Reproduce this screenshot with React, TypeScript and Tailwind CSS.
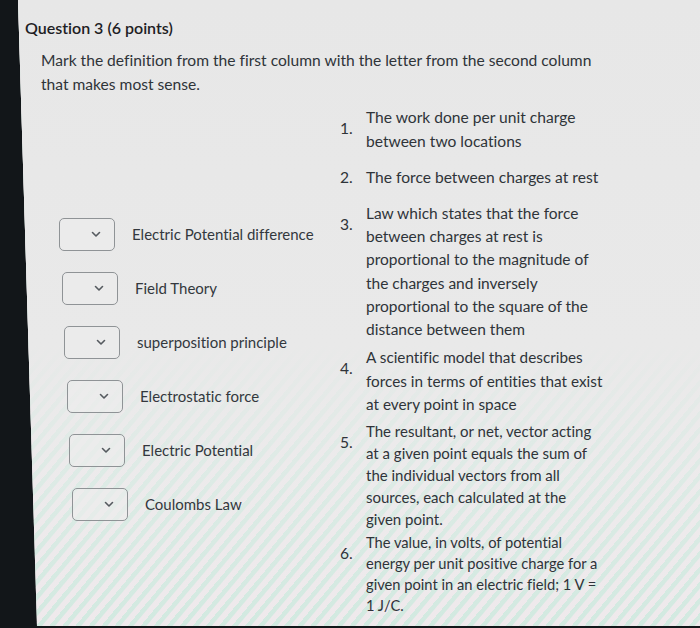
import { ReactNode } from "react";

type Choice = { label: string; shift: string };

type Answer = {
  n: number;
  text: ReactNode;
  wraps: boolean;
  gap: string;
  lead: string;
  size: string;
  width: string;
};

const choices: Choice[] = [
  { label: "Electric Potential difference", shift: "ml-[59px]" },
  { label: "Field Theory", shift: "ml-[62px]" },
  { label: "superposition principle", shift: "ml-[64px]" },
  { label: "Electrostatic force", shift: "ml-[67px]" },
  { label: "Electric Potential", shift: "ml-[69px]" },
  { label: "Coulombs Law", shift: "ml-[72px]" },
];

const answers: Answer[] = [
  {
    n: 1,
    text: "The work done per unit charge between two locations",
    wraps: true,
    gap: "mt-0",
    lead: "leading-[24px]",
    size: "text-[15.6px]",
    width: "w-[242px]",
  },
  {
    n: 2,
    text: "The force between charges at rest",
    wraps: false,
    gap: "mt-[12px]",
    lead: "leading-[24px]",
    size: "text-[15.6px]",
    width: "w-[242px]",
  },
  {
    n: 3,
    text: "Law which states that the force between charges at rest is proportional to the magnitude of the charges and inversely proportional to the square of the distance between them",
    wraps: true,
    gap: "mt-[13px]",
    lead: "leading-[23.2px]",
    size: "text-[15.5px]",
    width: "w-[242px]",
  },
  {
    n: 4,
    text: "A scientific model that describes forces in terms of entities that exist at every point in space",
    wraps: true,
    gap: "mt-[5px]",
    lead: "leading-[23.5px]",
    size: "text-[15.3px]",
    width: "w-[242px]",
  },
  {
    n: 5,
    text: "The resultant, or net, vector acting at a given point equals the sum of the individual vectors from all sources, each calculated at the given point.",
    wraps: true,
    gap: "mt-[3px]",
    lead: "leading-[22px]",
    size: "text-[15px]",
    width: "w-[236px]",
  },
  {
    n: 6,
    text: "The value, in volts, of potential energy per unit positive charge for a given point in an electric field; 1 V = 1 J/C.",
    wraps: true,
    gap: "mt-[2px]",
    lead: "leading-[21px]",
    size: "text-[14.7px]",
    width: "w-[242px]",
  },
];

const Chevron = () => (
  <svg width="10" height="7" viewBox="0 0 10 7" fill="none">
    <path d="M1.5 1.5 L5 5 L8.5 1.5" stroke="#555a5f" strokeWidth="1.6" strokeLinecap="round" strokeLinejoin="round" />
  </svg>
);

const Dropdown = () => (
  <div className="flex h-[33px] w-[56px] shrink-0 items-center justify-end rounded-[5px] border border-[#8f9396] bg-[#ececec]/60 pr-[13px]">
    <Chevron />
  </div>
);

export default function App() {
  return (
    <div className="h-[628px] w-[700px] overflow-hidden bg-[#121619]">
      <div
        className="h-[626px] bg-[linear-gradient(to_bottom,#e7e7e7_0%,#e9e9e9_55%,rgba(234,236,235,0.55)_75%,rgba(234,236,235,0.1)_100%),repeating-linear-gradient(130deg,#cfe9df_0px,#cfe9df_4px,#efe9ec_5px,#efe9ec_10px),linear-gradient(#e8ecea,#e8ecea)] pt-[17px] font-['Lato','Liberation_Sans',sans-serif] [clip-path:polygon(18px_0,100%_0,100%_100%,37px_100%)] [font-variant-ligatures:none]"
      >
        <h2 className="ml-[25px] text-[16px] font-semibold leading-[22px] text-[#1d2023]">Question 3 (6 points)</h2>
        <p className="ml-[41px] mt-[9px] w-[560px] text-[15.6px] leading-[24px] text-[#2f3439]">
          Mark the definition from the first column with the letter from the second column that makes most sense.
        </p>

        <div className="mt-[9px] flex">
          {/* left: dropdowns with the terms */}
          <div className="flex w-[340px] shrink-0 flex-col gap-[21px] pt-[113px]">
            {choices.map((c) => (
              <div key={c.label} className={`flex items-center gap-[17px] ${c.shift}`}>
                <Dropdown />
                <span className="text-[15px] text-[#33383d]">{c.label}</span>
              </div>
            ))}
          </div>

          {/* right: numbered definitions */}
          <ol className="w-[270px]">
            {answers.map((a) => (
              <li key={a.n} className={`flex text-[#2f3439] ${a.size} ${a.gap} ${a.lead}`}>
                <span className={`w-[26px] shrink-0 text-[15.6px] ${a.wraps ? "pt-[11px]" : ""}`}>{a.n}.</span>
                <span className={a.width}>{a.text}</span>
              </li>
            ))}
          </ol>
        </div>
      </div>
    </div>
  );
}
